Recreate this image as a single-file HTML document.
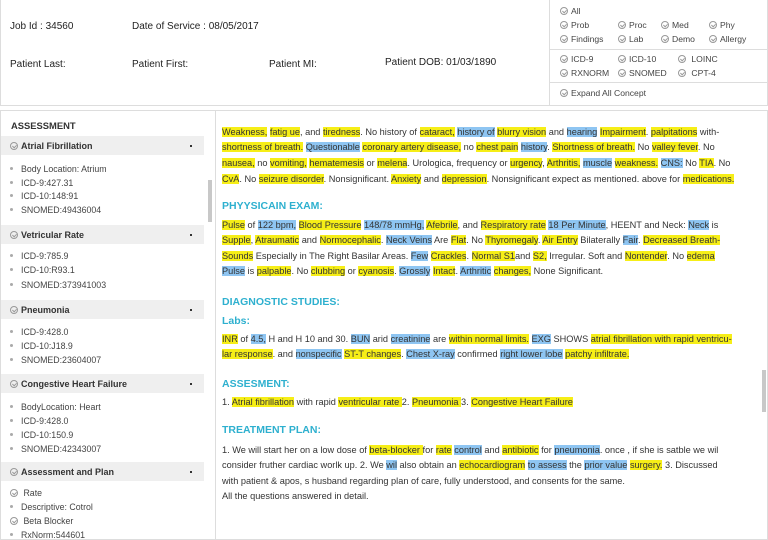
<!DOCTYPE html>
<html><head><meta charset="utf-8"><style>
*{margin:0;padding:0;box-sizing:border-box}
body{width:768px;height:540px;overflow:hidden;background:#fff;font-family:"Liberation Sans",sans-serif;color:#333;position:relative}
.a{position:absolute;white-space:nowrap}
.hdr{position:absolute;left:0;top:0;width:768px;height:106px;border:1px solid #ddd;border-top:none}
.h{font-size:10px;color:#222}
.rp{position:absolute;left:549px;top:0;width:219px;height:106px;border-left:1px solid #ddd}
.ck{display:inline-block;width:8px;height:8px;border:1px solid #999;border-radius:50%;position:relative;vertical-align:-1px;margin-right:3px}
.ck:after{content:"";position:absolute;left:2px;top:1px;width:2px;height:3px;border:solid #999;border-width:0 1px 1px 0;transform:rotate(45deg)}
.s{font-size:8.6px;color:#444}
.side{position:absolute;left:0;top:110px;width:216px;height:430px;border:1px solid #ddd}
.bar{position:absolute;left:1px;width:203px;height:19px;background:#efefef;font-size:9px;font-weight:bold;color:#333;padding:5px 0 0 9px}
.bar i{position:absolute;right:12px;top:9px;width:2px;height:2px;background:#333}
.li{font-size:8.8px;color:#444}
.li:before{content:"";display:inline-block;width:3px;height:3px;background:#aaa;border-radius:50%;margin:0 8px 2px 0}
.main{position:absolute;left:216px;top:110px;width:552px;height:430px;border:1px solid #ddd;border-left:none}
.t{font-size:9.2px;color:#333}
.y{background:#f6ee17}
.b{background:#8ec5f2}
.hd{font-size:10.5px;font-weight:bold;color:#2eb0cf}
</style></head><body>
<div class="hdr"></div>
<div class="a h" style="left:10px;top:21px">Job Id : 34560</div>
<div class="a h" style="left:132px;top:21px">Date of Service : 08/05/2017</div>
<div class="a h" style="left:10px;top:59px">Patient Last:</div>
<div class="a h" style="left:132px;top:59px">Patient First:</div>
<div class="a h" style="left:269px;top:59px">Patient MI:</div>
<div class="a h" style="left:385px;top:57px">Patient DOB: 01/03/1890</div>
<div class="rp"></div>
<div class="a" style="left:550px;top:49px;width:218px;border-top:1px solid #ddd"></div>
<div class="a" style="left:550px;top:82px;width:218px;border-top:1px solid #ddd"></div>
<div class="a s" style="left:560px;top:6px"><span class="ck"></span>All</div>
<div class="a s" style="left:560px;top:20px"><span class="ck"></span>Prob</div>
<div class="a s" style="left:618px;top:20px"><span class="ck"></span>Proc</div>
<div class="a s" style="left:661px;top:20px"><span class="ck"></span>Med</div>
<div class="a s" style="left:709px;top:20px"><span class="ck"></span>Phy</div>
<div class="a s" style="left:560px;top:34px"><span class="ck"></span>Findings</div>
<div class="a s" style="left:618px;top:34px"><span class="ck"></span>Lab</div>
<div class="a s" style="left:661px;top:34px"><span class="ck"></span>Demo</div>
<div class="a s" style="left:709px;top:34px"><span class="ck"></span>Allergy</div>
<div class="a s" style="left:560px;top:54px"><span class="ck"></span>ICD-9</div>
<div class="a s" style="left:618px;top:54px"><span class="ck"></span>ICD-10</div>
<div class="a s" style="left:678px;top:54px"><span class="ck"></span> LOINC</div>
<div class="a s" style="left:560px;top:68px"><span class="ck"></span>RXNORM</div>
<div class="a s" style="left:618px;top:68px"><span class="ck"></span>SNOMED</div>
<div class="a s" style="left:678px;top:68px"><span class="ck"></span> CPT-4</div>
<div class="a s" style="left:560px;top:88px"><span class="ck"></span>Expand All Concept</div>

<div class="side"></div>
<div class="a" style="left:208px;top:180px;width:4px;height:42px;background:#c8c8c8"></div>
<div class="a" style="left:11px;top:120px;font-size:9.4px;font-weight:bold;color:#333">ASSESSMENT</div>
<div class="bar" style="top:136px"><span class="ck"></span>Atrial Fibrillation<i></i></div>
<div class="a li" style="left:10px;top:164px">Body Location: Atrium</div>
<div class="a li" style="left:10px;top:178px">ICD-9:427.31</div>
<div class="a li" style="left:10px;top:191px">ICD-10:148:91</div>
<div class="a li" style="left:10px;top:205px">SNOMED:49436004</div>
<div class="bar" style="top:225px"><span class="ck"></span>Vetricular Rate<i></i></div>
<div class="a li" style="left:10px;top:251px">ICD-9:785.9</div>
<div class="a li" style="left:10px;top:265px">ICD-10:R93.1</div>
<div class="a li" style="left:10px;top:280px">SNOMED:373941003</div>
<div class="bar" style="top:300px"><span class="ck"></span>Pneumonia<i></i></div>
<div class="a li" style="left:10px;top:327px">ICD-9:428.0</div>
<div class="a li" style="left:10px;top:341px">ICD-10:J18.9</div>
<div class="a li" style="left:10px;top:355px">SNOMED:23604007</div>
<div class="bar" style="top:374px"><span class="ck"></span>Congestive Heart Failure<i></i></div>
<div class="a li" style="left:10px;top:402px">BodyLocation: Heart</div>
<div class="a li" style="left:10px;top:416px">ICD-9:428.0</div>
<div class="a li" style="left:10px;top:430px">ICD-10:150.9</div>
<div class="a li" style="left:10px;top:444px">SNOMED:42343007</div>
<div class="bar" style="top:462px"><span class="ck"></span>Assessment and Plan<i></i></div>
<div class="a" style="left:10px;top:488px;font-size:8.8px;color:#444"><span class="ck"></span> Rate</div>
<div class="a li" style="left:10px;top:502px">Descriptive: Cotrol</div>
<div class="a" style="left:10px;top:516px;font-size:8.8px;color:#444"><span class="ck"></span> Beta Blocker</div>
<div class="a li" style="left:10px;top:530px">RxNorm:544601</div>

<div class="main"></div>
<div class="a" style="left:762px;top:370px;width:4px;height:42px;background:#c8c8c8"></div>
<div class="a t" style="left:222px;top:127px"><span class="y">Weakness,</span> <span class="y">fatig ue</span>, and <span class="y">tiredness</span>. No history of <span class="y">cataract,</span> <span class="b">history of</span> <span class="y">blurry vision</span> and <span class="b">hearing</span> <span class="y">Impairment</span>. <span class="y">palpitations</span> with-</div>
<div class="a t" style="left:222px;top:142px"><span class="y">shortness of breath.</span> <span class="b">Questionable</span> <span class="y">coronary artery disease,</span> no <span class="y">chest pain</span> <span class="b">history</span>. <span class="y">Shortness of breath.</span> No <span class="y">valley fever</span>. No</div>
<div class="a t" style="left:222px;top:158px"><span class="y">nausea,</span> no <span class="y">vomiting,</span> <span class="y">hematemesis</span> or <span class="y">melena</span>. Urologica, frequency or <span class="y">urgency</span>, <span class="y">Arthritis,</span> <span class="b">muscle</span> <span class="y">weakness.</span> <span class="b">CNS:</span> No <span class="y">TIA</span>. No</div>
<div class="a t" style="left:222px;top:174px"><span class="y">CvA</span>. No <span class="y">seizure disorder</span>. Nonsignificant. <span class="y">Anxiety</span> and <span class="y">depression</span>. Nonsignificant expect as mentioned. above for <span class="y">medications.</span></div>
<div class="a hd" style="left:222px;top:200px">PHYYSICAIN EXAM:</div>
<div class="a t" style="left:222px;top:220px"><span class="y">Pulse</span> of <span class="b">122 bpm,</span> <span class="y">Blood Pressure</span> <span class="b">148/78 mmHg,</span> <span class="y">Afebrile</span>, and <span class="y">Respiratory rate</span> <span class="b">18 Per Minute</span>, HEENT and Neck: <span class="b">Neck</span> is</div>
<div class="a t" style="left:222px;top:235px"><span class="y">Supple</span>, <span class="y">Atraumatic</span> and <span class="y">Normocephalic</span>. <span class="b">Neck Veins</span> Are <span class="y">Flat</span>. No <span class="y">Thyromegaly</span>. <span class="y">Air Entry</span> Bilaterally <span class="b">Fair</span>. <span class="y">Decreased Breath-</span></div>
<div class="a t" style="left:222px;top:251px"><span class="y">Sounds</span> Especially in The Right Basilar Areas. <span class="b">Few</span> <span class="y">Crackles</span>. <span class="y">Normal S1</span>and <span class="y">S2,</span> Irregular. Soft and <span class="y">Nontender</span>. No <span class="y">edema</span></div>
<div class="a t" style="left:222px;top:266px"><span class="b">Pulse</span> is <span class="y">palpable</span>. No <span class="y">clubbing</span> or <span class="y">cyanosis</span>. <span class="b">Grossly</span> <span class="y">Intact</span>. <span class="b">Arthritic</span> <span class="y">changes,</span> None Significant.</div>
<div class="a hd" style="left:222px;top:296px">DIAGNOSTIC STUDIES:</div>
<div class="a hd" style="left:222px;top:315px">Labs:</div>
<div class="a t" style="left:222px;top:334px"><span class="y">INR</span> of <span class="b">4.5,</span> H and H 10 and 30. <span class="b">BUN</span> arid <span class="b">creatinine</span> are <span class="y">within normal limits.</span> <span class="b">EXG</span> SHOWS <span class="y">atrial fibrillation with rapid ventricu-</span></div>
<div class="a t" style="left:222px;top:349px"><span class="y">lar response</span>. and <span class="b">nonspecific</span> <span class="y">ST-T changes</span>. <span class="b">Chest X-ray</span> confirmed <span class="b">right lower lobe</span> <span class="y">patchy  infiltrate.</span></div>
<div class="a hd" style="left:222px;top:378px">ASSESMENT:</div>
<div class="a t" style="left:222px;top:397px">1. <span class="y">Atrial fibrillation</span> with rapid <span class="y">ventricular rate </span> 2. <span class="y">Pneumonia </span> 3. <span class="y">Congestive Heart Failure </span></div>
<div class="a hd" style="left:222px;top:424px">TREATMENT PLAN:</div>
<div class="a t" style="left:222px;top:445px">1. We will start her on a low dose of <span class="y">beta-blocker </span> for <span class="y">rate</span> <span class="b">control</span> and <span class="y">antibiotic</span> for <span class="b">pneumonia</span>. once , if she is satble  we wil</div>
<div class="a t" style="left:222px;top:460px">consider fruther cardiac worlk up. 2. We <span class="b">wil</span> also obtain an <span class="y">echocardiogram</span> <span class="b">to assess</span> the <span class="b">prior value</span> <span class="y">surgery.</span> 3. Discussed</div>
<div class="a t" style="left:222px;top:476px">with patient &amp; apos, s husband regarding plan of care, fully understood, and consents for the same.</div>
<div class="a t" style="left:222px;top:491px">All the questions answered in detail.</div>
</body></html>
